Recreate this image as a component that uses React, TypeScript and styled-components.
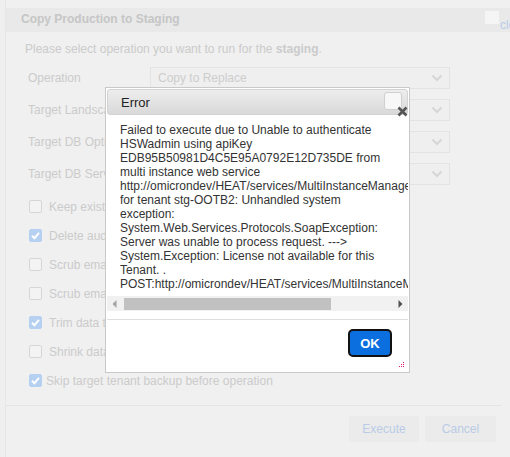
import styled, { createGlobalStyle } from "styled-components";

const GlobalStyle = createGlobalStyle`
  html, body {
    margin: 0;
    padding: 0;
    background: #efefef;
    font-family: "Liberation Sans", Arial, sans-serif;
  }
`;

const FORM_ROWS = ["Operation", "Target Landscape", "Target DB Options", "Target DB Server"];

const CHECK_ROWS = [
  { label: "Keep existing data in target tenant", checked: false },
  { label: "Delete audit history", checked: true },
  { label: "Scrub email addresses", checked: false },
  { label: "Scrub email recipients", checked: false },
  { label: "Trim data tables", checked: true },
  { label: "Shrink database", checked: false },
];

const ERROR_TEXT =
  "Failed to execute due to Unable to authenticate HSWadmin using apiKey EDB95B50981D4C5E95A0792E12D735DE from multi instance web service http://omicrondev/HEAT/services/MultiInstanceManagement.asmx for tenant stg-OOTB2: Unhandled system exception: System.Web.Services.Protocols.SoapException: Server was unable to process request. ---> System.Exception: License not available for this Tenant. . POST:http://omicrondev/HEAT/services/MultiInstanceManagement.asmx";

function Chevron() {
  return (
    <svg width="12" height="8" viewBox="0 0 12 8">
      <path d="M1.5 1.5 L6 6 L10.5 1.5" fill="none" stroke="#d6d6d6" strokeWidth="2" />
    </svg>
  );
}

function Tick() {
  return (
    <svg width="11" height="11" viewBox="0 0 11 11">
      <path d="M2 5.8 L4.4 8.2 L9 2.8" fill="none" stroke="#fff" strokeWidth="2" />
    </svg>
  );
}

function App() {
  return (
    <Page>
      <GlobalStyle />
      <BackDialog>
        <TitleBar>
          <Title>Copy Production to Staging</Title>
          <CloseBox />
          <CloseLink>close</CloseLink>
        </TitleBar>
        <Intro>
          Please select operation you want to run for the <b>staging</b>.
        </Intro>
        <Form>
          {FORM_ROWS.map((label, i) => (
            <FormRow key={label}>
              <Label>{label}</Label>
              <Select>
                <span>{i === 0 ? "Copy to Replace" : ""}</span>
                <Chevron />
              </Select>
            </FormRow>
          ))}
        </Form>
        <CheckList>
          {CHECK_ROWS.map((row) => (
            <CheckRow key={row.label}>
              <Box $checked={row.checked}>{row.checked && <Tick />}</Box>
              <CheckText>{row.label}</CheckText>
            </CheckRow>
          ))}
          <CheckRow $tight>
            <Box $checked>
              <Tick />
            </Box>
            <CheckText>Skip target tenant backup before operation</CheckText>
          </CheckRow>
        </CheckList>
        <Footer>
          <GhostButton $w={70}>Execute</GhostButton>
          <GhostButton $w={71}>Cancel</GhostButton>
        </Footer>
      </BackDialog>

      <ErrorDialog>
        <ErrorTitleBar>
          <ErrorTitle>Error</ErrorTitle>
          <CloseSquare />
          <CloseIcon width="11" height="11" viewBox="0 0 11 11">
            <path d="M1.5 1.5 L9.5 9.5 M9.5 1.5 L1.5 9.5" stroke="#555" strokeWidth="2.6" />
          </CloseIcon>
        </ErrorTitleBar>
        <ErrorBody>
          <Message>{ERROR_TEXT}</Message>
        </ErrorBody>
        <HScroll>
          <ArrowBtn>
            <svg width="5" height="8" viewBox="0 0 5 8">
              <path d="M4.5 0 L0.5 4 L4.5 8 Z" fill="#a3a3a3" />
            </svg>
          </ArrowBtn>
          <Track>
            <Thumb />
          </Track>
          <ArrowBtn>
            <svg width="5" height="8" viewBox="0 0 5 8">
              <path d="M0.5 0 L4.5 4 L0.5 8 Z" fill="#505050" />
            </svg>
          </ArrowBtn>
        </HScroll>
        <ButtonPane>
          <OkButton>OK</OkButton>
        </ButtonPane>
        <ResizeGrip width="8" height="8" viewBox="0 0 8 8">
          <defs>
            <pattern id="dots" width="2" height="2" patternUnits="userSpaceOnUse">
              <rect width="1" height="1" fill="#e5197c" />
            </pattern>
          </defs>
          <path d="M8 0 L8 8 L0 8 Z" fill="url(#dots)" />
        </ResizeGrip>
      </ErrorDialog>
    </Page>
  );
}

export default App;

const Page = styled.div`
  position: relative;
  width: 510px;
  height: 457px;
  overflow: hidden;
  background: #efefef;
  padding-left: 5px;
  box-sizing: border-box;
`;

const BackDialog = styled.div`
  border-left: 1px solid #e6e6e6;
  padding-top: 8px;
  height: 100%;
  box-sizing: border-box;
  background: #f0f0f0;
`;

const TitleBar = styled.div`
  display: flex;
  align-items: flex-start;
  width: 522px;
  height: 24px;
  padding: 4px 0 0 15px;
  box-sizing: border-box;
  background: #e9e9e9;
  white-space: nowrap;
`;

const Title = styled.div`
  font-size: 12px;
  font-weight: bold;
  line-height: 14px;
  color: #c6c6c6;
`;

const CloseBox = styled.div`
  margin-left: auto;
  margin-top: -1px;
  width: 14px;
  height: 13px;
  background: #f5f5f5;
`;

const CloseLink = styled.span`
  margin-left: 1px;
  margin-top: 6px;
  font-size: 12px;
  color: #b8cbe8;
`;

const Intro = styled.div`
  margin-top: 10px;
  padding-left: 19px;
  font-size: 12px;
  line-height: 14px;
  color: #cbcbcb;

  b {
    font-weight: bold;
  }
`;

const Form = styled.div`
  display: flex;
  flex-direction: column;
  gap: 10px;
  margin-top: 11px;
  padding-left: 22px;
`;

const FormRow = styled.div`
  display: flex;
  align-items: center;
  height: 22px;
`;

const Label = styled.div`
  width: 122px;
  font-size: 12px;
  color: #cbcbcb;
  white-space: nowrap;
`;

const Select = styled.div`
  display: flex;
  align-items: center;
  justify-content: space-between;
  width: 300px;
  height: 22px;
  box-sizing: border-box;
  padding: 0 6px 0 7px;
  border: 1px solid #e3e3e3;
  background: #efefef;
  font-size: 12px;
  color: #cdcdcd;
`;

const CheckList = styled.div`
  display: flex;
  flex-direction: column;
  margin-top: 7px;
  padding-left: 23px;
`;

const CheckRow = styled.div<{ $tight?: boolean }>`
  display: flex;
  align-items: center;
  gap: ${(p) => (p.$tight ? 4 : 7)}px;
  height: 29px;
`;

const Box = styled.div<{ $checked?: boolean }>`
  display: flex;
  align-items: center;
  justify-content: center;
  width: 13px;
  height: 13px;
  box-sizing: border-box;
  border-radius: 2px;
  border: 1px solid ${(p) => (p.$checked ? "#b6d0f2" : "#d6d6d6")};
  background: ${(p) => (p.$checked ? "#b6d0f2" : "#f3f3f3")};
`;

const CheckText = styled.span`
  font-size: 12px;
  color: #cbcbcb;
  white-space: nowrap;
`;

const Footer = styled.div`
  display: flex;
  justify-content: flex-end;
  gap: 6px;
  margin: 10px 8px 0 0;
  padding: 10px 6px 0 0;
  border-top: 1px solid #e5e5e5;
`;

const GhostButton = styled.div<{ $w: number }>`
  display: flex;
  align-items: center;
  justify-content: center;
  width: ${(p) => p.$w}px;
  height: 26px;
  border-radius: 2px;
  background: #ebebeb;
  font-size: 12px;
  color: #b9cbe6;
`;

const ErrorDialog = styled.div`
  position: absolute;
  left: 105px;
  top: 87px;
  width: 305px;
  height: 286px;
  box-sizing: border-box;
  padding: 1px;
  border: 1px solid #c9c9c9;
  background: #fff;
  display: flex;
  flex-direction: column;
`;

const ErrorTitleBar = styled.div`
  position: relative;
  display: flex;
  align-items: center;
  height: 26px;
  box-sizing: border-box;
  padding-left: 13px;
  border: 1px solid #d3d3d3;
  border-radius: 3px;
  background: linear-gradient(#ededed, #d9d9d9);
`;

const ErrorTitle = styled.span`
  font-size: 13px;
  color: #222;
`;

const CloseSquare = styled.div`
  position: absolute;
  left: 276px;
  top: 2px;
  width: 18px;
  height: 18px;
  box-sizing: border-box;
  border: 1px solid #d0d0d0;
  border-radius: 3px;
  background: #f7f7f7;
`;

const CloseIcon = styled.svg`
  position: absolute;
  left: 289px;
  top: 16px;
`;

const ErrorBody = styled.div`
  overflow: hidden;
  padding: 8px 0 5px 13px;
`;

const Message = styled.div`
  width: 274px;
  font-size: 12px;
  line-height: 14px;
  color: #333;
`;

const HScroll = styled.div`
  display: flex;
  height: 15px;
  background: #f1f1f1;
`;

const ArrowBtn = styled.div`
  display: flex;
  align-items: center;
  justify-content: center;
  width: 15px;
`;

const Track = styled.div`
  flex: 1;
  display: flex;
  align-items: center;
  padding-left: 2px;
`;

const Thumb = styled.div`
  width: 207px;
  height: 12px;
  background: #c1c1c1;
`;

const ButtonPane = styled.div`
  display: flex;
  justify-content: flex-end;
  margin-top: 8px;
  padding: 9px 16px 0 0;
  border-top: 1px solid #dedede;
`;

const OkButton = styled.div`
  display: flex;
  align-items: center;
  justify-content: center;
  width: 44px;
  height: 28px;
  box-sizing: border-box;
  border: 2px solid #111;
  border-radius: 5px;
  background: #0b6fe0;
  font-size: 13px;
  font-weight: bold;
  color: #fff;
`;

const ResizeGrip = styled.svg`
  position: absolute;
  right: 4px;
  bottom: 4px;
`;
